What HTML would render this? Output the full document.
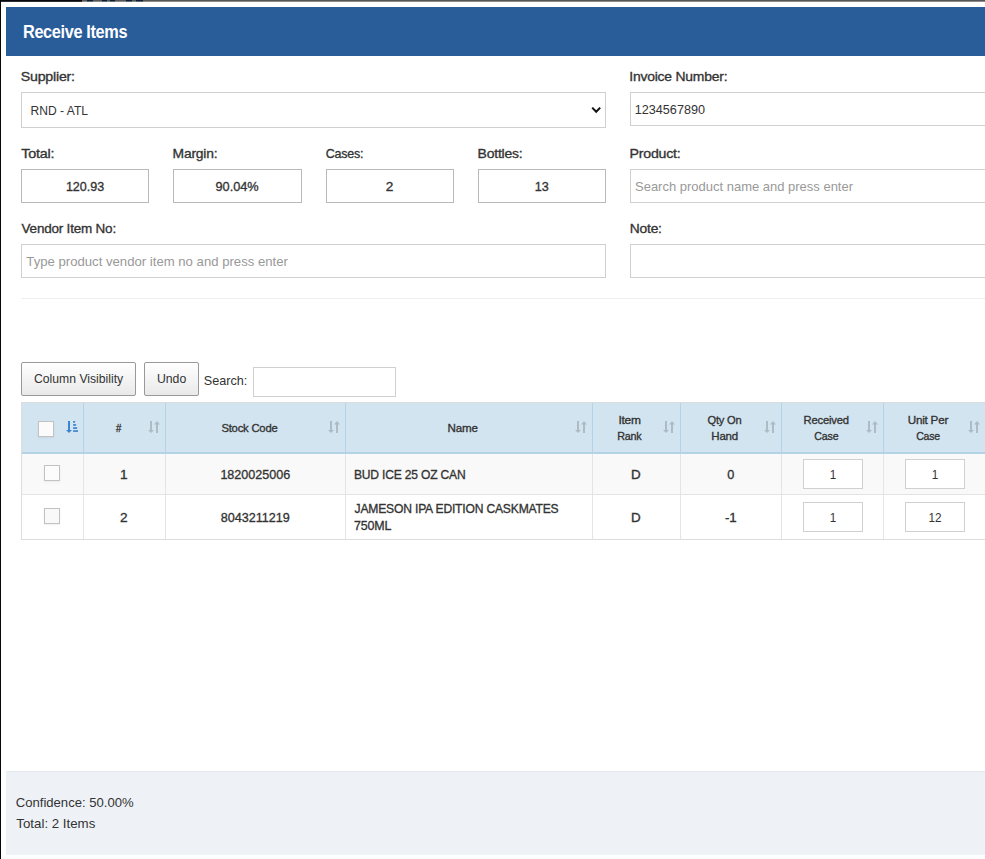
<!DOCTYPE html>
<html><head><meta charset="utf-8">
<style>
html,body{margin:0;padding:0;}
body{width:985px;height:859px;overflow:hidden;position:relative;background:#fff;font-family:"Liberation Sans",sans-serif;color:#333;}
.a{position:absolute;white-space:nowrap;}
.t{position:absolute;white-space:nowrap;line-height:20px;transform-origin:0 0;}
.box{position:absolute;box-sizing:border-box;background:#fff;border:1px solid #d0d0d0;}
.dk{border-color:#b9b9b9;}
.vl{position:absolute;width:1px;}
.si{position:absolute;}
.btn{position:absolute;box-sizing:border-box;background:linear-gradient(to bottom,#fff 0%,#e9e9e9 100%);border:1px solid #999;border-radius:2px;}
.cb{position:absolute;width:16px;height:16px;box-sizing:border-box;border:1px solid #c2c2c2;box-shadow:0 1px 2px rgba(0,0,0,0.06);}
</style></head><body>
<!-- background remnants -->
<div class="a" style="left:0;top:0;width:985px;height:1px;background:#565656;"></div>
<div class="a" style="left:0;top:1px;width:985px;height:1px;background:#8a8a8a;"></div>
<div class="a" style="left:0;top:0;width:82px;height:1px;background:#07090d;"></div>
<div class="a" style="left:0;top:1px;width:82px;height:1px;background:#2a2d33;"></div>
<div class="a" style="left:87px;top:0;width:6px;height:1px;background:#0c1e33;"></div><div class="a" style="left:87px;top:1px;width:6px;height:1px;background:#5a6675;"></div>
<div class="a" style="left:102px;top:0;width:5px;height:1px;background:#0c1e33;"></div><div class="a" style="left:102px;top:1px;width:5px;height:1px;background:#5a6675;"></div>
<div class="a" style="left:110px;top:0;width:5px;height:1px;background:#0c1e33;"></div><div class="a" style="left:110px;top:1px;width:5px;height:1px;background:#5a6675;"></div>
<div class="a" style="left:126px;top:0;width:6px;height:1px;background:#0c1e33;"></div><div class="a" style="left:126px;top:1px;width:6px;height:1px;background:#5a6675;"></div>
<div class="a" style="left:136px;top:0;width:7px;height:1px;background:#0c1e33;"></div><div class="a" style="left:136px;top:1px;width:7px;height:1px;background:#5a6675;"></div>
<div class="a" style="left:0;top:0;width:1px;height:859px;background:#05070a;"></div>
<!-- header -->
<div class="a" style="left:6px;top:7px;width:979px;height:49px;background:#295d9a;"></div>
<!-- form -->
<div class="box" style="left:21px;top:92px;width:585px;height:36px;"></div>
<svg class="a" style="left:589.7px;top:105px;" width="12" height="10" viewBox="0 0 12 10"><path d="M2.2 2.6 L6.2 6.8 L10.2 2.6" fill="none" stroke="#111" stroke-width="2"/></svg>
<div class="box dk" style="left:21px;top:169px;width:128px;height:34px;"></div>
<div class="box dk" style="left:173px;top:169px;width:129px;height:34px;"></div>
<div class="box dk" style="left:326px;top:169px;width:128px;height:34px;"></div>
<div class="box dk" style="left:478px;top:169px;width:128px;height:34px;"></div>
<div class="box" style="left:21px;top:244px;width:585px;height:34px;"></div>
<div class="box" style="left:630px;top:92px;width:400px;height:34px;"></div>
<div class="box" style="left:630px;top:169px;width:400px;height:34px;"></div>
<div class="box" style="left:630px;top:244px;width:400px;height:34px;"></div>
<div class="a" style="left:21px;top:298px;width:964px;height:1px;background:#eee;"></div>
<!-- toolbar -->
<div class="btn" style="left:21px;top:362px;width:115px;height:34px;"></div>
<div class="btn" style="left:144px;top:362px;width:55px;height:34px;"></div>
<div class="box" style="left:253px;top:367px;width:143px;height:30px;"></div>
<!-- table -->
<div class="a" style="left:21px;top:402px;width:964px;height:1px;background:#ddd;"></div>
<div class="a" style="left:22px;top:403px;width:963px;height:49px;background:#d2e4f0;"></div>
<div class="a" style="left:22px;top:452px;width:963px;height:2px;background:#b4d3e7;"></div>
<div class="a" style="left:22px;top:454px;width:963px;height:40px;background:#f9f9f9;"></div>
<div class="a" style="left:21px;top:494px;width:964px;height:1px;background:#e4e4e4;"></div>
<div class="a" style="left:21px;top:539px;width:964px;height:1px;background:#ddd;"></div>
<div class="vl" style="left:21px;top:402px;height:138px;background:#ddd;"></div>
<div class="vl" style="left:83px;top:403px;height:51px;background:#b4d3e7;"></div><div class="vl" style="left:83px;top:454px;height:85px;background:#e4e4e4;"></div>
<div class="vl" style="left:165px;top:403px;height:51px;background:#b4d3e7;"></div><div class="vl" style="left:165px;top:454px;height:85px;background:#e4e4e4;"></div>
<div class="vl" style="left:345px;top:403px;height:51px;background:#b4d3e7;"></div><div class="vl" style="left:345px;top:454px;height:85px;background:#e4e4e4;"></div>
<div class="vl" style="left:592px;top:403px;height:51px;background:#b4d3e7;"></div><div class="vl" style="left:592px;top:454px;height:85px;background:#e4e4e4;"></div>
<div class="vl" style="left:680px;top:403px;height:51px;background:#b4d3e7;"></div><div class="vl" style="left:680px;top:454px;height:85px;background:#e4e4e4;"></div>
<div class="vl" style="left:781px;top:403px;height:51px;background:#b4d3e7;"></div><div class="vl" style="left:781px;top:454px;height:85px;background:#e4e4e4;"></div>
<div class="vl" style="left:883px;top:403px;height:51px;background:#b4d3e7;"></div><div class="vl" style="left:883px;top:454px;height:85px;background:#e4e4e4;"></div>
<svg class="si" style="left:147.6px;top:421px;" width="12" height="12" viewBox="0 0 12 12"><g fill="#adbbc5"><rect x="2" y="0" width="2" height="10"/><path d="M0 9H6L3 12Z"/><rect x="8" y="2" width="2" height="10"/><path d="M6 3.5H12L9 0Z"/></g></svg>
<svg class="si" style="left:327.6px;top:421px;" width="12" height="12" viewBox="0 0 12 12"><g fill="#adbbc5"><rect x="2" y="0" width="2" height="10"/><path d="M0 9H6L3 12Z"/><rect x="8" y="2" width="2" height="10"/><path d="M6 3.5H12L9 0Z"/></g></svg>
<svg class="si" style="left:574.6px;top:421px;" width="12" height="12" viewBox="0 0 12 12"><g fill="#adbbc5"><rect x="2" y="0" width="2" height="10"/><path d="M0 9H6L3 12Z"/><rect x="8" y="2" width="2" height="10"/><path d="M6 3.5H12L9 0Z"/></g></svg>
<svg class="si" style="left:662.6px;top:421px;" width="12" height="12" viewBox="0 0 12 12"><g fill="#adbbc5"><rect x="2" y="0" width="2" height="10"/><path d="M0 9H6L3 12Z"/><rect x="8" y="2" width="2" height="10"/><path d="M6 3.5H12L9 0Z"/></g></svg>
<svg class="si" style="left:763.6px;top:421px;" width="12" height="12" viewBox="0 0 12 12"><g fill="#adbbc5"><rect x="2" y="0" width="2" height="10"/><path d="M0 9H6L3 12Z"/><rect x="8" y="2" width="2" height="10"/><path d="M6 3.5H12L9 0Z"/></g></svg>
<svg class="si" style="left:865.6px;top:421px;" width="12" height="12" viewBox="0 0 12 12"><g fill="#adbbc5"><rect x="2" y="0" width="2" height="10"/><path d="M0 9H6L3 12Z"/><rect x="8" y="2" width="2" height="10"/><path d="M6 3.5H12L9 0Z"/></g></svg>
<svg class="si" style="left:968.1px;top:421px;" width="12" height="12" viewBox="0 0 12 12"><g fill="#adbbc5"><rect x="2" y="0" width="2" height="10"/><path d="M0 9H6L3 12Z"/><rect x="8" y="2" width="2" height="10"/><path d="M6 3.5H12L9 0Z"/></g></svg>
<svg class="si" style="left:66px;top:421px;" width="12" height="12" viewBox="0 0 12 12"><g fill="#3c84d0"><rect x="2" y="0" width="2" height="10"/><path d="M0 9H6L3 12Z"/><rect x="7.1" y="0" width="2" height="1.7"/><rect x="7.1" y="3.1" width="3" height="1.7"/><rect x="7.1" y="6.2" width="4" height="1.7"/><rect x="7.1" y="9.2" width="5" height="1.7"/></g></svg>
<div class="cb" style="left:38px;top:421px;background:#fbfbfb;"></div>
<div class="cb" style="left:44px;top:465px;background:#fcfcfc;"></div>
<div class="cb" style="left:44px;top:508px;background:#f9f9f9;"></div>
<div class="box" style="left:803px;top:459px;width:60px;height:30px;"></div>
<div class="box" style="left:905px;top:459px;width:60px;height:30px;"></div>
<div class="box" style="left:803px;top:502px;width:60px;height:30px;"></div>
<div class="box" style="left:905px;top:502px;width:60px;height:30px;"></div>
<!-- footer -->
<div class="a" style="left:6px;top:771px;width:979px;height:84px;background:#eef2f7;border-top:1px solid #e4e9ef;box-sizing:border-box;"></div>
<!-- texts -->
<div class="t" id="title" style="left:0;top:22.0px;font-size:18.4px;color:#fff;transform:translateX(22.99px) scaleX(0.8862);font-weight:bold;letter-spacing:-0.4px;">Receive Items</div>
<div class="t" id="l1" style="left:0;top:66.5px;font-size:13.3px;color:#333;transform:translateX(20.77px) scaleX(1.0667);-webkit-text-stroke:0.33px #333;letter-spacing:-0.2px;">Supplier:</div>
<div class="t" id="l2" style="left:0;top:143.5px;font-size:13.3px;color:#333;transform:translateX(21.30px) scaleX(1.0790);-webkit-text-stroke:0.33px #333;letter-spacing:-0.2px;">Total:</div>
<div class="t" id="l3" style="left:0;top:143.5px;font-size:13.3px;color:#333;transform:translateX(172.62px) scaleX(1.0410);-webkit-text-stroke:0.33px #333;letter-spacing:-0.2px;">Margin:</div>
<div class="t" id="l4" style="left:0;top:143.5px;font-size:13.3px;color:#333;transform:translateX(325.63px) scaleX(0.9385);-webkit-text-stroke:0.33px #333;letter-spacing:-0.2px;">Cases:</div>
<div class="t" id="l5" style="left:0;top:143.5px;font-size:13.3px;color:#333;transform:translateX(477.61px) scaleX(1.0497);-webkit-text-stroke:0.33px #333;letter-spacing:-0.2px;">Bottles:</div>
<div class="t" id="l6" style="left:0;top:218.5px;font-size:13.3px;color:#333;transform:translateX(21.55px) scaleX(1.0141);-webkit-text-stroke:0.33px #333;letter-spacing:-0.2px;">Vendor Item No:</div>
<div class="t" id="l7" style="left:0;top:66.5px;font-size:13.3px;color:#333;transform:translateX(629.25px) scaleX(1.0457);-webkit-text-stroke:0.33px #333;letter-spacing:-0.2px;">Invoice Number:</div>
<div class="t" id="l8" style="left:0;top:143.5px;font-size:13.3px;color:#333;transform:translateX(629.50px) scaleX(1.0645);-webkit-text-stroke:0.33px #333;letter-spacing:-0.2px;">Product:</div>
<div class="t" id="l9" style="left:0;top:218.5px;font-size:13.3px;color:#333;transform:translateX(629.82px) scaleX(1.0359);-webkit-text-stroke:0.33px #333;letter-spacing:-0.2px;">Note:</div>
<div class="t" id="v1" style="left:0;top:100.5px;font-size:12.3px;color:#333;transform:translateX(30.52px) scaleX(0.9817);">RND - ATL</div>
<div class="t" id="v2" style="left:0;top:99.5px;font-size:12.3px;color:#333;transform:translateX(634.73px) scaleX(1.0275);">1234567890</div>
<div class="t" id="c1" style="left:0;top:176.5px;font-size:13px;color:#333;transform:translateX(65.88px) scaleX(0.9652);-webkit-text-stroke:0.33px #333;">120.93</div>
<div class="t" id="c2" style="left:0;top:176.5px;font-size:13px;color:#333;transform:translateX(215.51px) scaleX(0.9793);-webkit-text-stroke:0.33px #333;">90.04%</div>
<div class="t" id="c3" style="left:0;top:176.5px;font-size:13px;color:#333;transform:translateX(385.69px) scaleX(1.0500);-webkit-text-stroke:0.33px #333;">2</div>
<div class="t" id="c4" style="left:0;top:176.5px;font-size:13px;color:#333;transform:translateX(534.67px) scaleX(0.9704);-webkit-text-stroke:0.33px #333;">13</div>
<div class="t" id="p1" style="left:0;top:252.0px;font-size:13.3px;color:#999;transform:translateX(26.35px) scaleX(0.9885);">Type product vendor item no and press enter</div>
<div class="t" id="p2" style="left:0;top:176.5px;font-size:13.3px;color:#999;transform:translateX(635.01px) scaleX(0.9766);">Search product name and press enter</div>
<div class="t" id="b1" style="left:0;top:369.0px;font-size:12.3px;color:#333;transform:translateX(34.00px) scaleX(0.9911);">Column Visibility</div>
<div class="t" id="b2" style="left:0;top:369.0px;font-size:12.3px;color:#333;transform:translateX(156.90px) scaleX(0.9964);">Undo</div>
<div class="t" id="s1" style="left:0;top:370.5px;font-size:13.3px;color:#333;transform:translateX(203.72px) scaleX(0.9514);">Search:</div>
<div class="t" id="h2" style="left:0;top:418.5px;font-size:10.4px;color:#333;transform:translateX(115.91px) scaleX(0.9200);-webkit-text-stroke:0.33px #333;">#</div>
<div class="t" id="h3" style="left:0;top:418.0px;font-size:11.2px;color:#333;transform:translateX(221.40px) scaleX(1.0045);-webkit-text-stroke:0.33px #333;letter-spacing:-0.2px;">Stock Code</div>
<div class="t" id="h4" style="left:0;top:418.0px;font-size:11.2px;color:#333;transform:translateX(447.62px) scaleX(1.0372);-webkit-text-stroke:0.33px #333;letter-spacing:-0.2px;">Name</div>
<div class="t" id="h5a" style="left:0;top:410.0px;font-size:11.2px;color:#333;transform:translateX(618.40px) scaleX(1.0700);-webkit-text-stroke:0.33px #333;letter-spacing:-0.2px;">Item</div>
<div class="t" id="h5b" style="left:0;top:426.0px;font-size:11.2px;color:#333;transform:translateX(617.18px) scaleX(0.9624);-webkit-text-stroke:0.33px #333;letter-spacing:-0.2px;">Rank</div>
<div class="t" id="h6a" style="left:0;top:410.0px;font-size:11.2px;color:#333;transform:translateX(707.45px) scaleX(0.9956);-webkit-text-stroke:0.33px #333;letter-spacing:-0.2px;">Qty On</div>
<div class="t" id="h6b" style="left:0;top:426.0px;font-size:11.2px;color:#333;transform:translateX(711.33px) scaleX(1.0280);-webkit-text-stroke:0.33px #333;letter-spacing:-0.2px;">Hand</div>
<div class="t" id="h7a" style="left:0;top:410.0px;font-size:11.2px;color:#333;transform:translateX(803.55px) scaleX(1.0045);-webkit-text-stroke:0.33px #333;letter-spacing:-0.2px;">Received</div>
<div class="t" id="h7b" style="left:0;top:426.0px;font-size:11.2px;color:#333;transform:translateX(814.36px) scaleX(0.9480);-webkit-text-stroke:0.33px #333;letter-spacing:-0.2px;">Case</div>
<div class="t" id="h8a" style="left:0;top:410.0px;font-size:11.2px;color:#333;transform:translateX(907.68px) scaleX(1.0426);-webkit-text-stroke:0.33px #333;letter-spacing:-0.2px;">Unit Per</div>
<div class="t" id="h8b" style="left:0;top:426.0px;font-size:11.2px;color:#333;transform:translateX(916.16px) scaleX(0.9400);-webkit-text-stroke:0.33px #333;letter-spacing:-0.2px;">Case</div>
<div class="t" id="r1a" style="left:0;top:464.5px;font-size:13px;color:#333;transform:translateX(120.11px) scaleX(1.0500);-webkit-text-stroke:0.33px #333;">1</div>
<div class="t" id="r1b" style="left:0;top:464.5px;font-size:13px;color:#333;transform:translateX(220.38px) scaleX(0.9656);-webkit-text-stroke:0.33px #333;">1820025006</div>
<div class="t" id="r1c" style="left:0;top:464.5px;font-size:13px;color:#333;transform:translateX(353.90px) scaleX(0.9288);-webkit-text-stroke:0.33px #333;letter-spacing:-0.2px;">BUD ICE 25 OZ CAN</div>
<div class="t" id="r1d" style="left:0;top:464.5px;font-size:13px;color:#333;transform:translateX(631.03px) scaleX(1.0303);-webkit-text-stroke:0.33px #333;">D</div>
<div class="t" id="r1e" style="left:0;top:464.5px;font-size:13px;color:#333;transform:translateX(727.16px) scaleX(0.9778);-webkit-text-stroke:0.33px #333;">0</div>
<div class="t" id="r2a" style="left:0;top:507.5px;font-size:13px;color:#333;transform:translateX(120.04px) scaleX(1.0500);-webkit-text-stroke:0.33px #333;">2</div>
<div class="t" id="r2b" style="left:0;top:507.5px;font-size:13px;color:#333;transform:translateX(220.66px) scaleX(0.9696);-webkit-text-stroke:0.33px #333;">8043211219</div>
<div class="t" id="r2c1" style="left:0;top:498.5px;font-size:13px;color:#333;transform:translateX(354.60px) scaleX(0.9306);-webkit-text-stroke:0.33px #333;letter-spacing:-0.2px;">JAMESON IPA EDITION CASKMATES</div>
<div class="t" id="r2c2" style="left:0;top:516.0px;font-size:13px;color:#333;transform:translateX(354.12px) scaleX(0.9569);-webkit-text-stroke:0.33px #333;letter-spacing:-0.2px;">750ML</div>
<div class="t" id="r2d" style="left:0;top:507.5px;font-size:13px;color:#333;transform:translateX(631.03px) scaleX(1.0303);-webkit-text-stroke:0.33px #333;">D</div>
<div class="t" id="r2e" style="left:0;top:507.5px;font-size:13px;color:#333;transform:translateX(724.95px) scaleX(1.0182);-webkit-text-stroke:0.33px #333;">-1</div>
<div class="t" id="i1" style="left:0;top:464.5px;font-size:12.3px;color:#333;transform:translateX(829.67px) scaleX(0.9500);">1</div>
<div class="t" id="i2" style="left:0;top:464.5px;font-size:12.3px;color:#333;transform:translateX(931.67px) scaleX(0.9500);">1</div>
<div class="t" id="i3" style="left:0;top:507.5px;font-size:12.3px;color:#333;transform:translateX(829.67px) scaleX(0.9500);">1</div>
<div class="t" id="i4" style="left:0;top:507.5px;font-size:12.3px;color:#333;transform:translateX(928.47px) scaleX(0.9500);">12</div>
<div class="t" id="f1" style="left:0;top:792.5px;font-size:13.3px;color:#333;transform:translateX(15.71px) scaleX(0.9853);">Confidence: 50.00%</div>
<div class="t" id="f2" style="left:0;top:813.5px;font-size:13.3px;color:#333;transform:translateX(16.35px) scaleX(0.9987);">Total: 2 Items</div>
</body></html>
